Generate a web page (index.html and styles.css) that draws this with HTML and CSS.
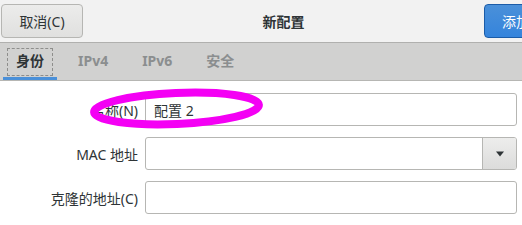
FILE: index.html
```html
<!DOCTYPE html>
<html>
<head>
<meta charset="utf-8">
<link rel="stylesheet" href="styles.css">
</head>
<body>
<div class="page">
  <header class="headerbar">
    <button class="btn btn-cancel">取消(C)</button>
    <div class="title">新配置</div>
    <button class="btn btn-add">添加</button>
  </header>
  <nav class="tabs">
    <div class="tab active"><span class="tab-label">身份</span></div>
    <div class="tab"><span class="tab-label">IPv4</span></div>
    <div class="tab"><span class="tab-label">IPv6</span></div>
    <div class="tab"><span class="tab-label">安全</span></div>
  </nav>
  <main class="form">
    <div class="row">
      <label class="label">名称(N)</label>
      <div class="entry">配置 2</div>
    </div>
    <div class="row">
      <label class="label">MAC 地址</label>
      <div class="entry combo">
        <div class="combo-text"></div>
        <div class="combo-btn">
          <svg width="10" height="6" viewBox="0 0 10 6"><path d="M1 0.5 L9 0.5 L5 5.5 Z" fill="#2e3436"/></svg>
        </div>
      </div>
    </div>
    <div class="row">
      <label class="label">克隆的地址(C)</label>
      <div class="entry"></div>
    </div>
  </main>
  <svg class="annotation" width="522" height="225" viewBox="0 0 522 225">
    <ellipse cx="176.5" cy="108.5" rx="82.5" ry="15.5" fill="none" stroke="#f400f4" stroke-width="8" transform="rotate(-2.5 176.5 108.5)"/>
  </svg>
</div>
</body>
</html>
```

FILE: styles.css
```css
html, body {
  margin: 0;
  padding: 0;
  background: #ffffff;
  overflow: hidden;
}
.page {
  position: relative;
  width: 522px;
  height: 225px;
  overflow: hidden;
  font-family: "Noto Sans", "Noto Sans CJK SC", sans-serif;
  font-size: 14px;
  color: #2e3436;
}
.headerbar {
  display: flex;
  align-items: center;
  height: 42px;
  padding: 0 0 0 1px;
  background: #f2f2f2;
  border-bottom: 1px solid #b0b0ae;
  box-sizing: content-box;
}
.btn {
  height: 34px;
  box-sizing: border-box;
  font-family: "Noto Sans", "Noto Sans CJK SC", sans-serif;
  font-size: 14px;
  border-radius: 4px;
  padding: 0;
  flex: none;
}
.btn-cancel {
  width: 82px;
  color: #2e3436;
  border: 1px solid #b6b6b3;
  background: linear-gradient(#ececeb, #e0e0df);
}
.title {
  flex: 1;
  text-align: center;
  font-weight: bold;
  font-size: 14px;
  color: #2e3436;
}
.btn-add {
  width: 70px;
  margin-right: -32px;
  color: #ffffff;
  border: 1px solid #1b5ca8;
  background: linear-gradient(#4a90d9, #3584dc);
  text-align: left;
  padding-left: 17px;
}
.tabs {
  display: flex;
  height: 37px;
  padding-left: 3px;
  background: #d1d1d0;
  border-bottom: 1px solid #b6b6b3;
  gap: 8px;
}
.tab {
  display: flex;
  align-items: center;
  justify-content: center;
  padding: 0 13px;
  font-weight: bold;
  color: #8b8e8f;
  border-bottom: 3px solid transparent;
  position: relative;
}
.tab.active {
  color: #2e3436;
  border-bottom-color: #4a90d9;
  padding: 0 13px;
}
.tab.active::before {
  content: "";
  position: absolute;
  left: 4px;
  right: 4px;
  top: 5px;
  bottom: 1px;
  border: 1px dashed #8e8e8c;
}
.form {
  display: flex;
  flex-direction: column;
  gap: 11px;
  padding: 12px 5px 0 0;
}
.row {
  display: flex;
  align-items: center;
  gap: 7px;
}
.label {
  width: 138px;
  text-align: right;
  flex: none;
  color: #2e3436;
}
.entry {
  flex: 1;
  height: 33px;
  box-sizing: border-box;
  border: 1px solid #b6b6b3;
  border-radius: 3px;
  padding: 0 8px;
  display: flex;
  align-items: center;
  background: #ffffff;
  color: #2e3436;
}
.combo {
  padding: 0;
  overflow: hidden;
}
.combo-text {
  flex: 1;
}
.combo-btn {
  width: 33px;
  height: 100%;
  border-left: 1px solid #b6b6b3;
  background: linear-gradient(#ededec, #dcdcdb);
  display: flex;
  align-items: center;
  justify-content: center;
}
.annotation {
  position: absolute;
  left: 0;
  top: 0;
  pointer-events: none;
}
```
